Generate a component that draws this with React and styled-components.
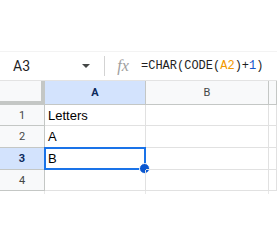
import React from "react";
import styled, { createGlobalStyle } from "styled-components";

const Global = createGlobalStyle`
  html, body { margin: 0; padding: 0; background: #fff; }
  body { font-family: Roboto, "Liberation Sans", Arial, sans-serif; }
`;

const Page = styled.div`
  width: 277px;
  height: 246px;
  overflow: hidden;
  background: #fff;
  display: flex;
  flex-direction: column;
`;

const TopSpace = styled.div`
  height: 51px;
  border-bottom: 1px solid #f3f3f3;
`;

const FormulaBar = styled.div`
  height: 28px;
  display: flex;
  align-items: center;
  border-bottom: 1px solid #e3e3e3;
`;

const NameBox = styled.div`
  width: 104px;
  box-sizing: border-box;
  padding: 0 14px 0 13px;
  display: flex;
  align-items: center;
  justify-content: space-between;
  font-size: 14px;
  color: #1f1f1f;
`;

const Caret = styled.span`
  width: 0;
  height: 0;
  border-left: 4px solid transparent;
  border-right: 4px solid transparent;
  border-top: 4px solid #444746;
`;

const Divider = styled.span`
  width: 1px;
  height: 20px;
  background: #d3d3d3;
`;

const Fx = styled.span`
  width: 36px;
  text-align: center;
  font-family: "Liberation Serif", serif;
  font-style: italic;
  font-size: 16px;
  color: #9e9e9e;
`;

const Formula = styled.span`
  font-family: "Liberation Mono", monospace;
  font-size: 12px;
  color: #1f1f1f;
  white-space: nowrap;
`;

const Tok = styled.span`
  color: ${(p) => p.$c};
`;

const Grid = styled.div`
  display: grid;
  grid-template-columns: 45px 101px 123px 1fr;
  grid-template-rows: 24px 21px 22px 22px 21px;
`;

const Corner = styled.div`
  box-sizing: border-box;
  background: #f8f9fa;
  border-right: 4px solid #c4c7c5;
  border-bottom: 4px solid #c4c7c5;
`;

const ColHead = styled.div`
  box-sizing: border-box;
  background: ${(p) => (p.$sel ? "#d3e3fd" : "#f8f9fa")};
  border-right: 1px solid #c4c7c5;
  border-bottom: 1px solid #c4c7c5;
  display: flex;
  align-items: center;
  justify-content: center;
  font-size: 11px;
  font-weight: ${(p) => (p.$sel ? 700 : 400)};
  color: ${(p) => (p.$sel ? "#0b2a5c" : "#444746")};
`;

const RowHead = styled.div`
  box-sizing: border-box;
  background: ${(p) => (p.$sel ? "#d3e3fd" : "#f8f9fa")};
  border-right: 1px solid #c4c7c5;
  border-bottom: 1px solid #c4c7c5;
  display: flex;
  align-items: center;
  justify-content: center;
  font-size: 11px;
  font-weight: ${(p) => (p.$sel ? 700 : 400)};
  color: ${(p) => (p.$sel ? "#0b2a5c" : "#444746")};
`;

const Cell = styled.div`
  position: relative;
  box-sizing: border-box;
  border-right: 1px solid #e1e1e1;
  border-bottom: 1px solid #e1e1e1;
  display: flex;
  align-items: center;
  padding-left: 3px;
  font-family: "Liberation Sans", Arial, sans-serif;
  font-size: 13px;
  color: #000;
`;

const Selection = styled.div`
  position: absolute;
  left: -1px;
  top: -1px;
  right: -1px;
  bottom: -1px;
  border: 2px solid #1a73e8;
  pointer-events: none;
`;

const Handle = styled.span`
  position: absolute;
  right: -6px;
  bottom: -6px;
  width: 9px;
  height: 9px;
  border-radius: 50%;
  background: #0b57d0;
  border: 1px solid #fff;
`;

const Ticks = styled.div`
  display: grid;
  grid-template-columns: 44px 1px 100px 1px 122px 1px 1fr;
  height: 3px;
`;

const Tick = styled.span`
  background: ${(p) => (p.$on ? "#e8e8e8" : "transparent")};
`;

const rows = [
  { n: 1, a: "Letters" },
  { n: 2, a: "A" },
  { n: 3, a: "B", sel: true },
  { n: 4, a: "" },
];

export default function App() {
  return (
    <Page>
      <Global />
      <TopSpace />
      <FormulaBar>
        <NameBox>
          <span>A3</span>
          <Caret />
        </NameBox>
        <Divider />
        <Fx>fx</Fx>
        <Formula>
          =CHAR(CODE(<Tok $c="#f29900">A2</Tok>)+<Tok $c="#1155cc">1</Tok>)
        </Formula>
      </FormulaBar>
      <Grid>
        <Corner />
        <ColHead $sel>A</ColHead>
        <ColHead>B</ColHead>
        <ColHead />
        {rows.map((r) => (
          <React.Fragment key={r.n}>
            <RowHead $sel={r.sel}>{r.n}</RowHead>
            <Cell>
              {r.a}
              {r.sel && (
                <Selection>
                  <Handle />
                </Selection>
              )}
            </Cell>
            <Cell />
            <Cell />
          </React.Fragment>
        ))}
      </Grid>
      <Ticks>
        <Tick />
        <Tick $on />
        <Tick />
        <Tick $on />
        <Tick />
        <Tick $on />
        <Tick />
      </Ticks>
    </Page>
  );
}
